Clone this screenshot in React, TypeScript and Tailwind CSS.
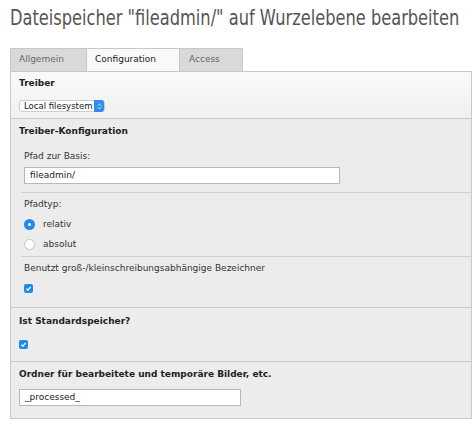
import React from "react";

const body = { fontFamily: '"DejaVu Sans", Verdana, sans-serif' };

function Radio({ checked }: { checked?: boolean }) {
  return checked ? (
    <span className="flex h-[11px] w-[11px] items-center justify-center rounded-full bg-[#1f8af0]">
      <span className="h-[3px] w-[3px] rounded-full bg-white" />
    </span>
  ) : (
    <span className="h-[11px] w-[11px] rounded-full border border-[#c4c4c4] bg-white" />
  );
}

function Check() {
  return (
    <span className="flex h-[9px] w-[9px] items-center justify-center rounded-[2px] bg-[#1f8af0]">
      <svg viewBox="0 0 10 10" className="h-[7px] w-[7px]">
        <path d="M2 5.2 L4.2 7.4 L8 2.6" fill="none" stroke="white" strokeWidth="1.8" />
      </svg>
    </span>
  );
}

export default function App() {
  return (
    <div className="h-[432px] w-[474px] overflow-hidden bg-white text-[#333]" style={body}>
      <h1
        className="pl-[10px] pt-[4px] text-[22px] leading-[28px] text-[#555]"
        style={{ fontFamily: '"DejaVu Sans Condensed", "DejaVu Sans", sans-serif' }}
      >
        <span className="inline-block origin-left whitespace-nowrap [transform:scaleX(0.82)]">
          Dateispeicher "fileadmin/" auf Wurzelebene bearbeiten
        </span>
      </h1>

      <div className="mt-[16px] flex pl-[10px] text-[9px]">
        <div className="flex h-[23px] w-[77px] items-center border border-b-0 border-[#c8c8c8] bg-[#d9d9d9] pl-[8px] text-[#666]">
          Allgemein
        </div>
        <div className="flex h-[23px] w-[93px] items-center border-t border-r border-[#c8c8c8] bg-[#f9f9f9] pl-[8px] text-[#222]">
          Configuration
        </div>
        <div className="flex h-[23px] w-[63px] items-center border-t border-r border-[#c8c8c8] bg-[#d9d9d9] pl-[9px] text-[#666]">
          Access
        </div>
      </div>

      <div className="ml-[10px] w-[462px] border border-[#c8c8c8] bg-[#ececec] text-[9px]">
        <div className="h-[47px] border-b border-[#c8c8c8] bg-gradient-to-b from-[#fafafa] to-[#f0f0f0] pl-[8px] pt-[4px]">
          <div className="font-bold leading-[14px] text-[#222]">Treiber</div>
          <div className="mt-[10px] flex h-[12px] w-[86px] items-center justify-between rounded-[3px] border border-[#cfcfcf] bg-white pl-[4px] text-[8.5px] text-[#222]">
            <span>Local filesystem</span>
            <span className="flex h-[12px] w-[10px] items-center justify-center rounded-r-[3px] bg-[#2f8df2]">
              <svg viewBox="0 0 6 8" className="h-[7px] w-[5px]">
                <path d="M1 3 L3 1 L5 3 M1 5 L3 7 L5 5" fill="none" stroke="white" strokeWidth="1" />
              </svg>
            </span>
          </div>
        </div>

        <div className="border-b border-[#c8c8c8]">
          <div className="pl-[8px] pt-[5px] font-bold leading-[14px] text-[#222]">Treiber-Konfiguration</div>
          <div className="pl-[10px]">
            <div className="border-b border-[#d0d0d0] pb-[8px] pl-[3px] pt-[12px]">
              <div className="leading-[12px]">Pfad zur Basis:</div>
              <div className="mt-[5px] flex h-[17px] w-[316px] items-center border border-[#b8b8b8] bg-white pl-[5px] text-[#222]">
                fileadmin/
              </div>
            </div>
            <div className="border-b border-[#d0d0d0] pb-[5px] pl-[3px] pt-[5px]">
              <div className="leading-[12px]">Pfadtyp:</div>
              <div className="mt-[8px] flex items-center gap-[8px]">
                <Radio checked />
                <span>relativ</span>
              </div>
              <div className="mt-[6px] flex items-center gap-[8px]">
                <Radio />
                <span>absolut</span>
              </div>
            </div>
            <div className="pb-[14px] pl-[3px] pt-[5px]">
              <div className="leading-[12px]">Benutzt groß-/kleinschreibungsabhängige Bezeichner</div>
              <div className="mt-[10px]">
                <Check />
              </div>
            </div>
          </div>
        </div>

        <div className="h-[54px] border-b border-[#c8c8c8] pl-[8px] pt-[7px]">
          <div className="font-bold leading-[13px] text-[#222]">Ist Standardspeicher?</div>
          <div className="mt-[12px]">
            <Check />
          </div>
        </div>

        <div className="h-[56px] pl-[8px] pt-[6px]">
          <div className="font-bold leading-[13px] text-[#222]">Ordner für bearbeitete und temporäre Bilder, etc.</div>
          <div className="mt-[8px] flex h-[17px] w-[222px] items-center border border-[#b8b8b8] bg-white pl-[5px] text-[#222]">
            _processed_
          </div>
        </div>
      </div>
    </div>
  );
}
